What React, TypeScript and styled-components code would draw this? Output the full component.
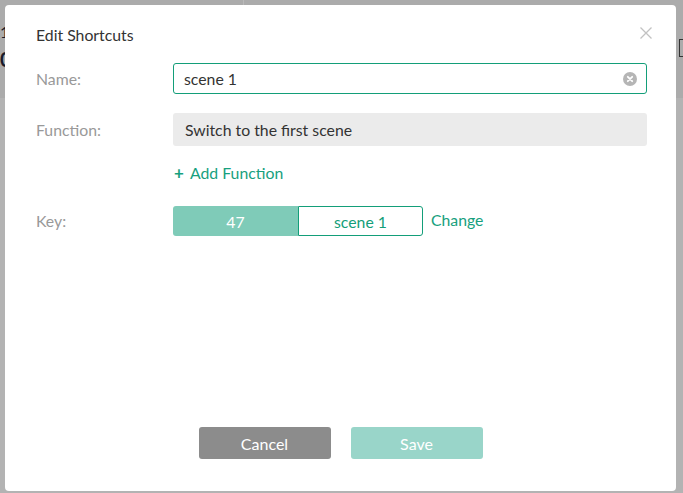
import React from "react";
import styled, { createGlobalStyle } from "styled-components";

const GlobalStyle = createGlobalStyle`
  html, body {
    margin: 0;
    padding: 0;
    height: 100%;
    overflow: hidden;
  }
  body {
    font-family: Lato, "Noto Sans", "Liberation Sans", sans-serif;
    background: #b3b3b3;
  }
`;

const App = () => {
  return (
    <>
      <GlobalStyle />
      <Page>
        <Header>
          <HeaderText>
            <span>1</span>
            <strong>0</strong>
          </HeaderText>
          <HeaderDivider />
          <HeaderSpacer />
          <HeaderBox />
        </Header>
      </Page>

      <Dialog>
        <TitleRow>
          <Title>Edit Shortcuts</Title>
          <CloseButton aria-label="close">
            <svg width="12" height="12" viewBox="0 0 12 12">
              <path d="M0.5 0.5 L11.5 11.5 M11.5 0.5 L0.5 11.5" stroke="#c2c2c2" strokeWidth="1.3" fill="none" />
            </svg>
          </CloseButton>
        </TitleRow>

        <Form>
          <Row>
            <Label>Name:</Label>
            <InputWrap>
              <TextInput defaultValue="scene 1" />
              <ClearIcon width="14" height="14" viewBox="0 0 14 14">
                <circle cx="7" cy="7" r="7" fill="#b5b5b5" />
                <path d="M4.8 4.8 L9.2 9.2 M9.2 4.8 L4.8 9.2" stroke="#fff" strokeWidth="1.8" strokeLinecap="round" />
              </ClearIcon>
            </InputWrap>
          </Row>

          <Row $kind="function">
            <Label>Function:</Label>
            <FunctionBox>Switch to the first scene</FunctionBox>
          </Row>

          <AddRow>
            <AddButton>
              <Plus>+</Plus>
              Add Function
            </AddButton>
          </AddRow>

          <Row $kind="key">
            <Label>Key:</Label>
            <KeyGroup>
              <KeyCode>47</KeyCode>
              <KeyName>scene 1</KeyName>
            </KeyGroup>
            <ChangeLink>Change</ChangeLink>
          </Row>
        </Form>

        <Footer>
          <Button $variant="cancel">Cancel</Button>
          <Button $variant="save">Save</Button>
        </Footer>
      </Dialog>
    </>
  );
};

const Page = styled.div`
  height: 100vh;
  display: flex;
  flex-direction: column;
`;

const Header = styled.div`
  height: 98px;
  background: #ababab;
  display: flex;
  align-items: flex-start;
`;

const HeaderText = styled.div`
  display: flex;
  flex-direction: column;
  gap: 6px;
  padding-top: 22px;
  color: #1a1a2a;
  font-size: 16px;
  width: 243px;

  strong {
    font-size: 20px;
    font-weight: 700;
  }
`;

const HeaderDivider = styled.div`
  width: 1px;
  height: 20px;
  background: #b9b9b9;
`;

const HeaderSpacer = styled.div`
  flex: 1;
`;

const HeaderBox = styled.div`
  width: 3px;
  height: 16px;
  margin-top: 39px;
  border: 1px solid #333;
  border-right: none;
`;

const Dialog = styled.div`
  position: fixed;
  top: 5px;
  left: 5px;
  width: 671px;
  height: 486px;
  box-sizing: border-box;
  background: #fff;
  border-radius: 4px;
  padding: 19px 29px 32px 31px;
  display: flex;
  flex-direction: column;
`;

const TitleRow = styled.div`
  display: flex;
  align-items: center;
  justify-content: space-between;
  height: 22px;
  margin-right: -5px;
`;

const Title = styled.h2`
  margin: 0;
  font-size: 15.8px;
  font-weight: 400;
  line-height: 22px;
  color: #333;
`;

const CloseButton = styled.button`
  border: none;
  background: none;
  padding: 0;
  margin-top: -4px;
  width: 12px;
  height: 12px;
  display: flex;
  cursor: pointer;
`;

const Form = styled.div`
  display: flex;
  flex-direction: column;
  margin-top: 17px;
`;

const Row = styled.div<{ $kind?: "function" | "key" }>`
  display: flex;
  align-items: center;
  height: ${(p) => (p.$kind === "function" ? "33px" : p.$kind === "key" ? "30px" : "31px")};
  margin-top: ${(p) => (p.$kind === "function" ? "19px" : p.$kind === "key" ? "22px" : "0")};
`;

const Label = styled.label`
  width: 137px;
  flex-shrink: 0;
  font-size: 15.8px;
  color: #999;
  line-height: 18px;
`;

const InputWrap = styled.div`
  flex: 1;
  position: relative;
  height: 100%;
`;

const TextInput = styled.input`
  width: 100%;
  height: 100%;
  box-sizing: border-box;
  border: 1px solid #139e79;
  border-radius: 3px;
  padding: 0 30px 0 10px;
  font-family: inherit;
  font-size: 15.8px;
  color: #333;
  outline: none;
`;

const ClearIcon = styled.svg`
  position: absolute;
  right: 10px;
  top: 50%;
  transform: translateY(-50%);
`;

const FunctionBox = styled.div`
  flex: 1;
  height: 100%;
  box-sizing: border-box;
  background: #ebebeb;
  border-radius: 3px;
  padding: 0 12px;
  display: flex;
  align-items: center;
  font-size: 15.8px;
  color: #333;
`;

const AddRow = styled.div`
  display: flex;
  padding-left: 137px;
  margin-top: 14px;
  height: 24px;
  align-items: center;
`;

const AddButton = styled.button`
  border: none;
  background: none;
  padding: 0;
  font-family: inherit;
  font-size: 15.8px;
  color: #17a07e;
  display: flex;
  align-items: center;
  cursor: pointer;
`;

const Plus = styled.span`
  font-size: 17px;
  font-weight: 700;
  width: 16px;
  text-align: left;
  margin-left: 1px;
`;

const KeyGroup = styled.div`
  display: flex;
  height: 100%;
`;

const KeyCode = styled.div`
  width: 125px;
  background: #7fcbb8;
  color: #fff;
  border-radius: 3px 0 0 3px;
  display: flex;
  align-items: center;
  justify-content: center;
  font-size: 15.8px;
`;

const KeyName = styled.div`
  width: 125px;
  box-sizing: border-box;
  border: 1px solid #139e79;
  border-radius: 0 3px 3px 0;
  color: #139e79;
  display: flex;
  align-items: center;
  justify-content: center;
  font-size: 15.8px;
`;

const ChangeLink = styled.a`
  margin-left: 8px;
  margin-bottom: 3px;
  font-size: 15.8px;
  color: #17a07e;
  cursor: pointer;
`;

const Footer = styled.div`
  margin-top: auto;
  display: flex;
  justify-content: center;
  gap: 20px;
  padding-right: 2px;
`;

const Button = styled.button<{ $variant: "cancel" | "save" }>`
  width: 132px;
  height: 32px;
  border: none;
  border-radius: 3px;
  font-family: inherit;
  font-size: 16px;
  color: #fff;
  background: ${(p) => (p.$variant === "cancel" ? "#8c8c8c" : "#99d5c9")};
  cursor: pointer;
`;

export default App;
